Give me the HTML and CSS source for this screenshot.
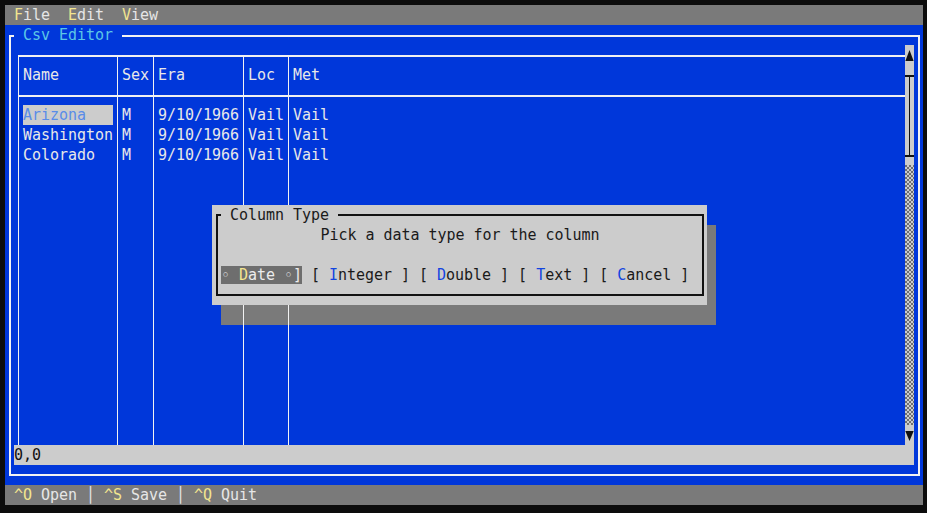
FILE: index.html
```html
<!DOCTYPE html>
<html>
<head>
<meta charset="utf-8">
<link rel="stylesheet" href="styles.css">
</head>
<body>
<div class="screen">
  <div class="menubar"> <span class="hk">F</span>ile  <span class="hk">E</span>dit  <span class="hk">V</span>iew</div>
  <div class="main">
    <div class="frame">
      <span class="wtitle"> Csv Editor </span>
      <div class="tblwrap">
        <div class="tbl">
          <div class="col c1">
            <div class="hd">Name</div>
            <div class="rows"><div class="cell sel">Arizona</div><div class="cell">Washington</div><div class="cell">Colorado</div></div>
          </div>
          <div class="col c2">
            <div class="hd">Sex</div>
            <div class="rows"><div class="cell">M</div><div class="cell">M</div><div class="cell">M</div></div>
          </div>
          <div class="col c3">
            <div class="hd">Era</div>
            <div class="rows"><div class="cell">9/10/1966</div><div class="cell">9/10/1966</div><div class="cell">9/10/1966</div></div>
          </div>
          <div class="col c4">
            <div class="hd">Loc</div>
            <div class="rows"><div class="cell">Vail</div><div class="cell">Vail</div><div class="cell">Vail</div></div>
          </div>
          <div class="col c5">
            <div class="hd">Met</div>
            <div class="rows"><div class="cell">Vail</div><div class="cell">Vail</div><div class="cell">Vail</div></div>
          </div>
        </div>
        <svg class="vscroll" width="9" height="400" viewBox="0 0 9 400">
          <defs>
            <pattern id="stip" width="4" height="4" patternUnits="userSpaceOnUse">
              <rect x="0.5" y="0" width="1" height="2" fill="#111"/>
              <rect x="2.5" y="2" width="1" height="2" fill="#111"/>
            </pattern>
          </defs>
          <rect x="0" y="0" width="9" height="400" fill="#cccccc"/>
          <polygon points="4.5,5 8.6,16 0.4,16" fill="#111"/>
          <rect x="0" y="30" width="9" height="2" fill="#111"/>
          <rect x="4" y="32" width="1" height="78" fill="#111"/>
          <rect x="0" y="110" width="9" height="2" fill="#111"/>
          <rect x="0" y="120" width="9" height="260" fill="url(#stip)"/>
          <polygon points="0.3,386 8.7,386 4.5,396" fill="#111"/>
        </svg>
      </div>
      <div class="pos">0,0</div>
    </div>
    <div class="shadow"></div>
    <div class="dialog">
      <div class="dframe">
        <span class="dtitle"> Column Type </span>
        <div class="dmsg">Pick a data type for the column</div>
        <div class="dbtns"><span class="btn-def">◦ <span class="hky">D</span>ate ◦]</span> [ <span class="hkb">I</span>nteger ] [ <span class="hkb">D</span>ouble ] [ <span class="hkb">T</span>ext ] [ <span class="hkb">C</span>ancel ]</div>
      </div>
    </div>
  </div>
  <div class="statusbar"> <span class="hk">^O</span> Open │ <span class="hk">^S</span> Save │ <span class="hk">^Q</span> Quit</div>
</div>
</body>
</html>
```
FILE: styles.css
```css
html, body {
  margin: 0;
  padding: 0;
  background: #0c0c0c;
}
body {
  width: 927px;
  height: 513px;
  overflow: hidden;
}
.screen {
  margin: 5px;
  width: 918px;
  height: 500px;
  display: flex;
  flex-direction: column;
  font-family: "DejaVu Sans Mono", monospace;
  font-size: 15px;
  line-height: 20px;
  letter-spacing: -0.03px;
}
.menubar, .statusbar, .wtitle, .dtitle, .hd, .cell, .pos, .dmsg, .dbtns {
  white-space: pre;
}
.menubar, .statusbar {
  height: 20px;
  flex: none;
  background: #7a7a7a;
  color: #e6e6e6;
}
.hk { color: #f2e58f; }
.main {
  height: 460px;
  flex: none;
  box-sizing: border-box;
  background: #0037da;
  position: relative;
  padding-top: 10px;
}
.frame {
  position: relative;
  z-index: 1;
  box-sizing: border-box;
  margin-left: 4px;
  width: 911px;
  height: 441px;
  border: 2px solid #f2f2f2;
  padding: 8px 0 0 3px;
}
.wtitle {
  position: absolute;
  top: -12px;
  left: 3px;
  width: 108px;
  height: 20px;
  background: #0037da;
  color: #5cc6e6;
}
.tblwrap {
  display: flex;
  width: 900px;
  height: 400px;
}
.tbl {
  flex: 1;
  margin: 10px 0 0 4px;
  height: 390px;
  box-sizing: border-box;
  border-top: 2px solid #f2f2f2;
  display: grid;
  grid-template-columns: 99px 36px 90px 45px 1fr;
  color: #e8e8e8;
}
.col {
  border-left: 1px solid #f2f2f2;
}
.hd {
  padding: 8px 0 10px 4px;
  height: 20px;
  border-bottom: 2px solid #f2f2f2;
}
.rows {
  padding: 8px 0 0 4px;
}
.cell { height: 20px; }
.sel {
  width: 90px;
  background: #cccccc;
  color: #5a8ce8;
}
.vscroll {
  display: block;
  flex: none;
}
.pos {
  width: 900px;
  height: 20px;
  background: #cccccc;
  color: #111;
}
.shadow {
  position: absolute;
  left: 216px;
  top: 200px;
  width: 495px;
  height: 100px;
  background: #7a7a7a;
  z-index: 0;
}
.dialog {
  position: absolute;
  left: 207px;
  top: 180px;
  width: 495px;
  height: 100px;
  box-sizing: border-box;
  background: #cccccc;
  padding: 9px 3px 0 4px;
  z-index: 2;
  color: #1a1a1a;
}
.dframe {
  position: relative;
  box-sizing: border-box;
  height: 82px;
  border: 2px solid #111;
  padding-top: 9px;
}
.dtitle {
  position: absolute;
  top: -11px;
  left: 3px;
  height: 20px;
  background: #cccccc;
  color: #1a1a1a;
}
.dmsg {
  height: 20px;
  text-align: center;
}
.dbtns {
  margin-top: 20px;
  height: 20px;
  padding-left: 3px;
}
.btn-def {
  background: #6e6e6e;
  color: #ececec;
}
.hky { color: #f5e58f; }
.hkb { color: #1244e0; }
```
